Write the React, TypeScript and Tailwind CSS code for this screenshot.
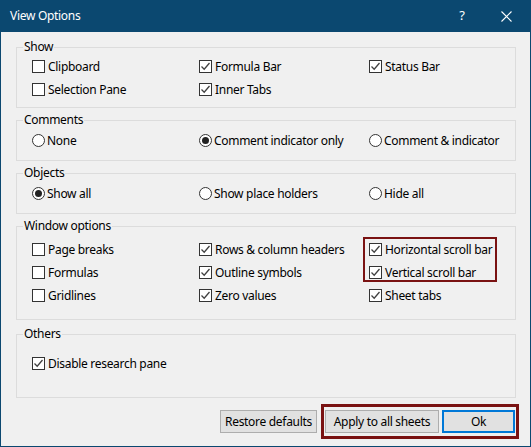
import type { ReactNode } from "react";

const font = { fontFamily: '"Noto Sans", "Open Sans", sans-serif' };

function Check({ checked, label }: { checked?: boolean; label: string }) {
  return (
    <div className="flex items-center gap-[3px] h-[23px]">
      <span className="w-[13px] h-[13px] border border-[#333333] bg-white flex items-center justify-center shrink-0">
        {checked && (
          <svg width="11" height="11" viewBox="0 0 11 11">
            <path d="M1.5 5.5 L4.2 8.2 L9.5 2" fill="none" stroke="#404040" strokeWidth="1.3" />
          </svg>
        )}
      </span>
      <span className="whitespace-nowrap">{label}</span>
    </div>
  );
}

function Radio({ checked, label }: { checked?: boolean; label: string }) {
  return (
    <div className="flex items-center gap-[2px] h-[23px]">
      <span className="w-[13px] h-[13px] rounded-full border border-[#333333] bg-white flex items-center justify-center shrink-0">
        {checked && <span className="w-[7px] h-[7px] rounded-full bg-[#222222]" />}
      </span>
      <span className="whitespace-nowrap">{label}</span>
    </div>
  );
}

function Group({ label, className, children }: { label: string; className: string; children: ReactNode }) {
  return (
    <div className={`relative border border-[#dcdcdc] ${className}`}>
      <span className="absolute left-[6px] -top-[10px] px-[1px] bg-[#f0f0f0] leading-[18px]">{label}</span>
      {children}
    </div>
  );
}

function Row({ children }: { children: ReactNode }) {
  return <div className="grid grid-cols-[167px_170px_1fr] pl-[15px]">{children}</div>;
}

export default function App() {
  return (
    <div
      className="relative w-[531px] h-[447px] bg-[#f0f0f0] text-[12px] tracking-[-0.3px] text-black border-x border-b border-[#0b4870] flex flex-col"
      style={font}
    >
      <div className="h-8 bg-[#0b4870] text-white flex items-center pl-[10px] -mx-px shrink-0">
        <span className="flex-1">View Options</span>
        <span className="w-[38px] text-center text-[13px]">?</span>
        <span className="w-[50px] flex justify-center">
          <svg width="11" height="11" viewBox="0 0 11 11">
            <path d="M0.5 0.5 L10.5 10.5 M10.5 0.5 L0.5 10.5" stroke="white" strokeWidth="1.1" />
          </svg>
        </span>
      </div>

      <div className="flex flex-col pl-[15px] pr-[14px]">
        <Group label="Show" className="mt-[15px] h-[61px] pt-[7px]">
          <Row>
            <Check label="Clipboard" />
            <Check checked label="Formula Bar" />
            <Check checked label="Status Bar" />
          </Row>
          <Row>
            <Check label="Selection Pane" />
            <Check checked label="Inner Tabs" />
          </Row>
        </Group>

        <Group label="Comments" className="mt-[12px] h-[41px] pt-[8px]">
          <Row>
            <Radio label="None" />
            <Radio checked label="Comment indicator only" />
            <Radio label="Comment & indicator" />
          </Row>
        </Group>

        <Group label="Objects" className="mt-[12px] h-[41px] pt-[8px]">
          <Row>
            <Radio checked label="Show all" />
            <Radio label="Show place holders" />
            <Radio label="Hide all" />
          </Row>
        </Group>

        <Group label="Window options" className="mt-[12px] h-[94px] pt-[11px]">
          <Row>
            <Check label="Page breaks" />
            <Check checked label="Rows & column headers" />
            <Check checked label="Horizontal scroll bar" />
          </Row>
          <Row>
            <Check label="Formulas" />
            <Check checked label="Outline symbols" />
            <Check checked label="Vertical scroll bar" />
          </Row>
          <Row>
            <Check label="Gridlines" />
            <Check checked label="Zero values" />
            <Check checked label="Sheet tabs" />
          </Row>
        </Group>

        <Group label="Others" className="mt-[14px] h-[64px] pt-[17px]">
          <Row>
            <Check checked label="Disable research pane" />
          </Row>
        </Group>

        <div className="flex justify-end mt-[12px] pr-[1px]">
          <button className="w-[97px] h-[23px] bg-[#e1e1e1] border border-[#adadad]">Restore defaults</button>
          <button className="w-[114px] h-[23px] ml-[8px] bg-[#e1e1e1] border border-[#adadad]">Apply to all sheets</button>
          <button className="w-[73px] h-[23px] ml-[3px] bg-[#e1e1e1] border-2 border-[#0078d7]">Ok</button>
        </div>
      </div>

      <div className="absolute left-[362px] top-[237px] w-[134px] h-[45px] border-2 border-[#7a1212] pointer-events-none" />
      <div className="absolute left-[320px] top-[404px] w-[198px] h-[35px] border-[3px] border-[#7a1212] pointer-events-none" />
    </div>
  );
}
